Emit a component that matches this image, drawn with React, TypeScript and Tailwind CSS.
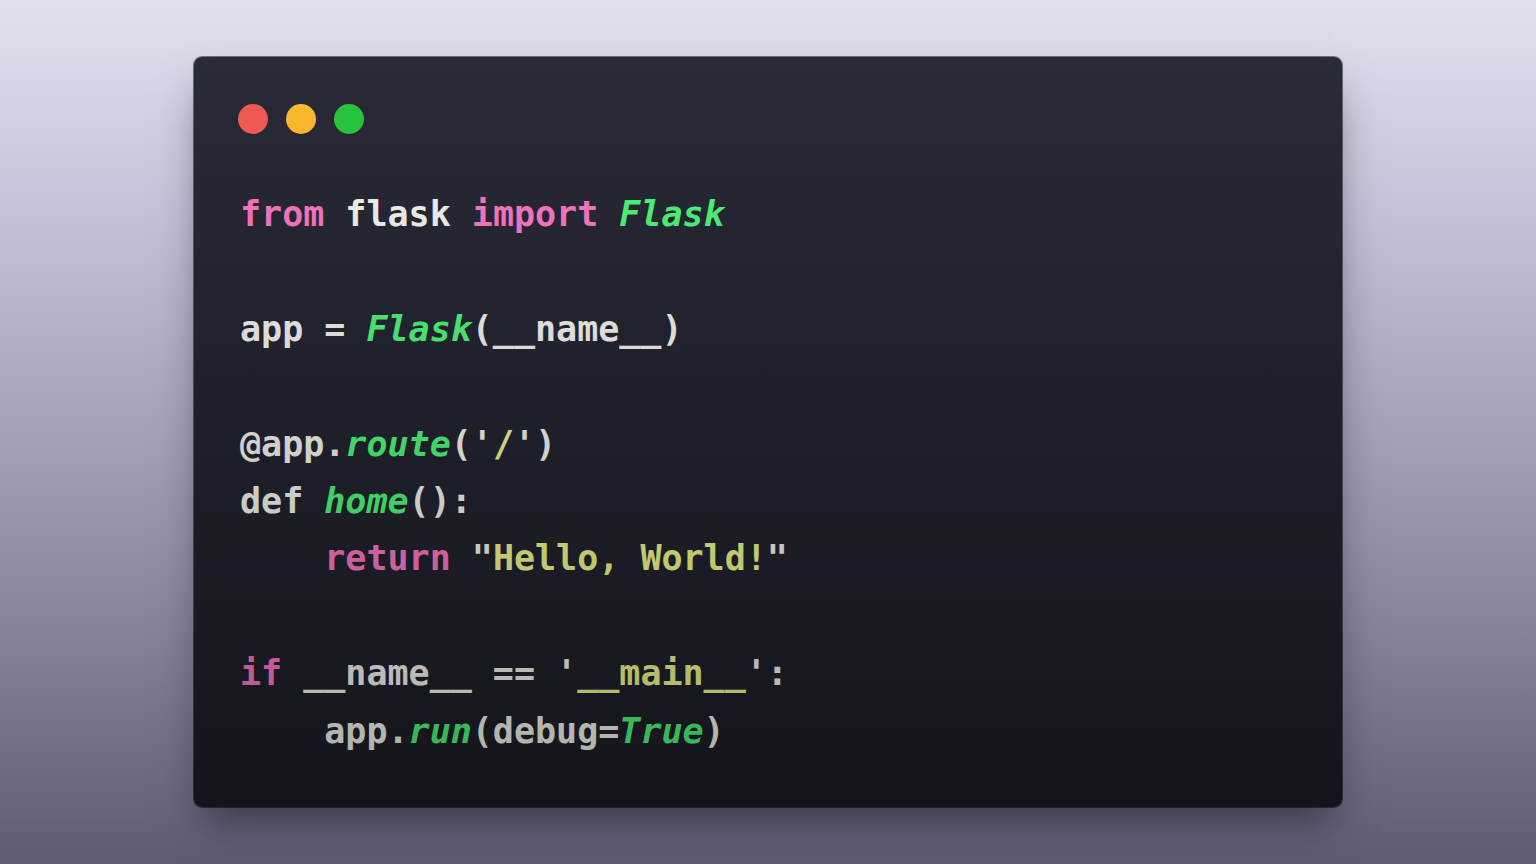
import React from "react";

type Tok = [string, string?];

const fg = "text-[#f8f8f2]";
const kw = "text-[#ff79c6]";
const fn = "text-[#50fa7b] italic";
const str = "text-[#f1fa8c]";

const lines: Tok[][] = [
  [["from", kw], [" flask ", fg], ["import", kw], [" "], ["Flask", fn]],
  [],
  [["app = ", fg], ["Flask", fn], ["(__name__)", fg]],
  [],
  [["@app.", fg], ["route", fn], ["('", fg], ["/", str], ["')", fg]],
  [["def ", fg], ["home", fn], ["():", fg]],
  [["    "], ["return", kw], [" \"", fg], ["Hello, World!", str], ["\"", fg]],
  [],
  [["if", kw], [" __name__ == '", fg], ["__main__", str], ["':", fg]],
  [["    app.", fg], ["run", fn], ["(debug=", fg], ["True", fn], [")", fg]],
];

const App = () => {
  return (
    <div className="flex h-screen w-full items-center justify-center bg-[linear-gradient(180deg,#e4dfee_0%,#bdbbd0_30%,#8f8ea4_65%,#5e5d70_100%)]">
      <div className="relative w-[1148px] overflow-hidden rounded-lg bg-[linear-gradient(180deg,#2a2b38_0%,#1d1e28_100%)] pt-[47px] pb-[47px] pl-[44px] shadow-[0_24px_40px_-10px_rgba(20,20,35,0.55)] ring-1 ring-black/50">
        <div className="flex gap-[18px]">
          <span className="block h-[30px] w-[30px] rounded-full bg-[#f65a56]" />
          <span className="block h-[30px] w-[30px] rounded-full bg-[#fdbc2f]" />
          <span className="block h-[30px] w-[30px] rounded-full bg-[#28c840]" />
        </div>
        <pre className="mt-[52px] pl-[2px] font-['DejaVu_Sans_Mono',monospace] text-[35px] font-bold leading-[57.4px] whitespace-pre">
          {lines.map((line, i) => (
            <div key={i} className="h-[57.4px]">
              {line.map(([t, c], j) => (
                <span key={j} className={c ?? fg}>
                  {t}
                </span>
              ))}
            </div>
          ))}
        </pre>
        <div className="pointer-events-none absolute inset-0 bg-[linear-gradient(180deg,rgba(0,0,0,0)_0%,rgba(0,0,0,0.3)_100%)]" />
      </div>
    </div>
  );
};

export default App;
